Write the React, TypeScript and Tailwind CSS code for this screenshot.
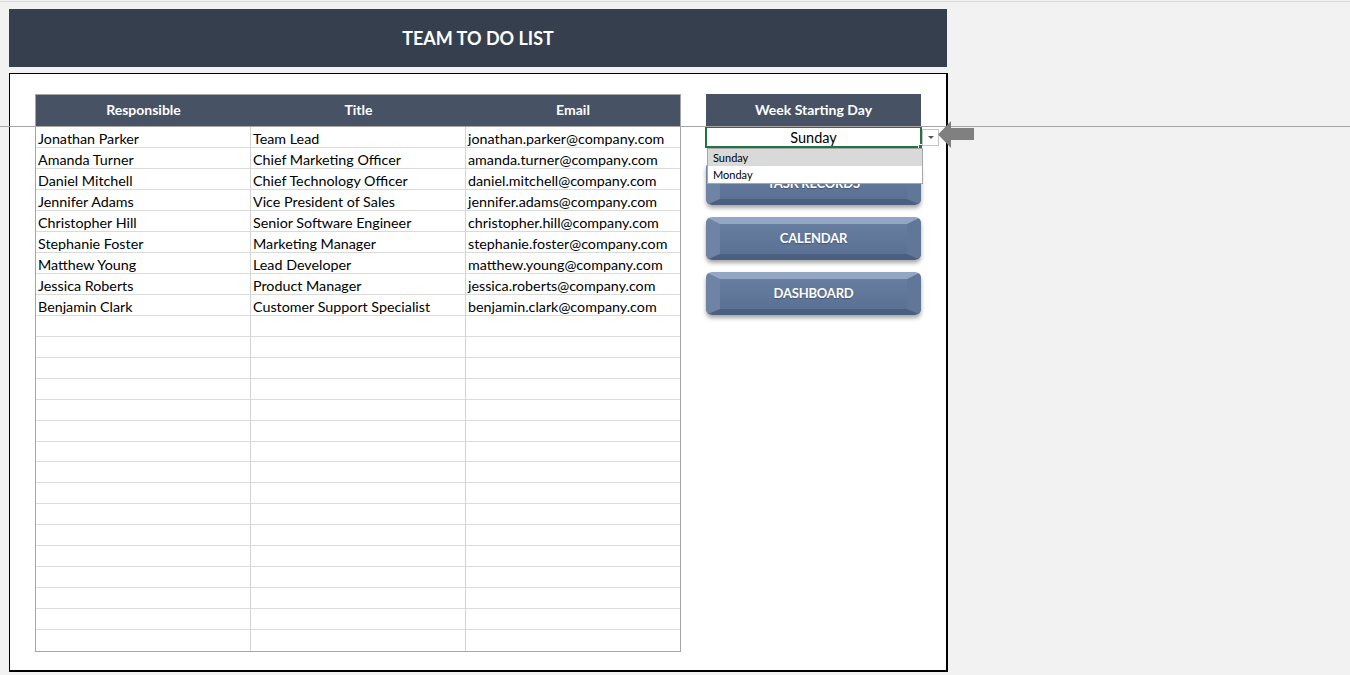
const people = [
  ["Jonathan Parker", "Team Lead", "jonathan.parker@company.com"],
  ["Amanda Turner", "Chief Marketing Officer", "amanda.turner@company.com"],
  ["Daniel Mitchell", "Chief Technology Officer", "daniel.mitchell@company.com"],
  ["Jennifer Adams", "Vice President of Sales", "jennifer.adams@company.com"],
  ["Christopher Hill", "Senior Software Engineer", "christopher.hill@company.com"],
  ["Stephanie Foster", "Marketing Manager", "stephanie.foster@company.com"],
  ["Matthew Young", "Lead Developer", "matthew.young@company.com"],
  ["Jessica Roberts", "Product Manager", "jessica.roberts@company.com"],
  ["Benjamin Clark", "Customer Support Specialist", "benjamin.clark@company.com"],
];

const rows = [...people, ...Array.from({ length: 16 }, () => ["", "", ""])];

function NavButton({ label }: { label: string }) {
  return (
    <div className="h-[43px] rounded-[6px] overflow-hidden shadow-[0_3px_4px_rgba(0,0,0,0.35)]">
      <div className="h-full border-t-[7px] border-b-[6px] border-x-[14px] border-t-[#93a7c4] border-l-[#6f84a5] border-r-[#617798] border-b-[#4b6080] bg-[linear-gradient(180deg,#687ea0_0%,#5b7193_100%)] flex items-center justify-center text-white font-bold text-[13px] tracking-[-0.2px] [text-shadow:0_1px_1px_rgba(0,0,0,0.3)]">
        {label}
      </div>
    </div>
  );
}

export default function App() {
  return (
    <div className="relative min-h-screen bg-[#f2f2f2] font-['Lato',sans-serif] text-black overflow-hidden">
      <div className="h-px mt-px bg-[#d9d9d9]" />
      <div className="ml-[9px] mt-[7px] w-[938px] h-[58px] bg-[#363f4e] flex items-center justify-center">
        <span className="text-white font-bold text-[18px]">TEAM TO DO LIST</span>
      </div>

      <div className="ml-[9px] mt-[6px] w-[939px] h-[599px] bg-white border border-black border-r-2 border-b-2 pt-[20px] pl-[25px] flex gap-[25px]">
        <div className="w-[646px] h-[558px] border border-[#a6a6a6] flex flex-col">
          <div className="h-[32px] pb-[2px] bg-[#475264] grid grid-cols-[215px_215px_214px] text-white font-bold text-[14px]">
            <div className="flex items-center justify-center">Responsible</div>
            <div className="flex items-center justify-center">Title</div>
            <div className="flex items-center justify-center">Email</div>
          </div>
          {rows.map((r, i) => (
            <div
              key={i}
              className="h-[21px] grid grid-cols-[215px_215px_214px] border-b border-[#dadada] last:border-b-0 text-[14.3px] leading-[20px] pt-[2px]"
            >
              <div className="pl-[2px] border-r border-[#d4d4d4] whitespace-nowrap overflow-hidden -mt-[2px] pt-[2px]">{r[0]}</div>
              <div className="pl-[2px] border-r border-[#d4d4d4] whitespace-nowrap overflow-hidden -mt-[2px] pt-[2px]">{r[1]}</div>
              <div className="pl-[2px] whitespace-nowrap overflow-hidden -mt-[2px] pt-[2px]">{r[2]}</div>
            </div>
          ))}
        </div>

        <div className="w-[215px] flex flex-col">
          <div className="h-[32px] pb-[2px] bg-[#475264] flex items-center justify-center text-white font-bold text-[14px]">
            Week Starting Day
          </div>
          <div className="relative h-[22px] -ml-px w-[217px] border-2 border-[#217346] flex items-center justify-center text-[14.5px] pt-px">
            Sunday
            <div className="absolute -right-[3px] -bottom-[3px] w-[5px] h-[5px] bg-[#217346] border border-white" />
          </div>
          <div className="mt-[14px] flex flex-col gap-[12px]">
            <NavButton label="TASK RECORDS" />
            <NavButton label="CALENDAR" />
            <NavButton label="DASHBOARD" />
          </div>
        </div>
      </div>

      {/* freeze pane line */}
      <div className="absolute left-0 right-0 top-[126px] h-px bg-[#a6a6a6]" />

      {/* dropdown button */}
      <div className="absolute left-[922px] top-[129px] w-[17px] h-[17px] bg-white border border-[#c6c6c6] flex items-center justify-center">
        <div className="w-0 h-0 border-l-[3px] border-r-[3px] border-t-[3px] border-l-transparent border-r-transparent border-t-[#555]" />
      </div>

      {/* dropdown list */}
      <div className="absolute left-[707px] top-[148px] w-[216px] h-[36px] bg-white border border-[#a6a6a6] text-[11px] leading-[17px]">
        <div className="h-[17px] bg-[#d9d9d9] pl-[5px]">Sunday</div>
        <div className="h-[17px] pl-[5px]">Monday</div>
      </div>

      {/* pointer arrow */}
      <svg className="absolute left-[938px] top-[121px]" width="37" height="27" viewBox="0 0 37 27">
        <polygon points="0,13.5 13,0 13,7 36,7 36,19 13,19 13,27" fill="#808080" />
      </svg>
    </div>
  );
}
